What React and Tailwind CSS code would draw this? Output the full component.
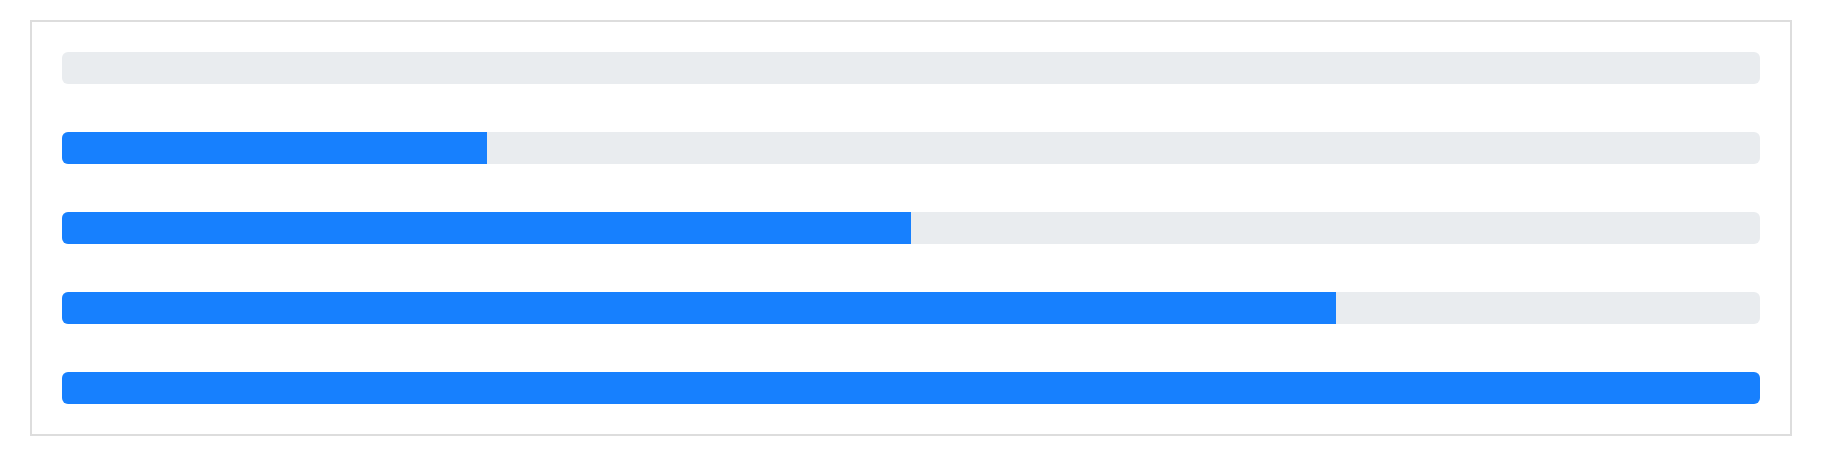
import React from "react";

const values = [0, 25, 50, 75, 100];

export default function App() {
  return (
    <div className="bg-white w-[1828px] h-[456px] px-[30px] pt-[20px]">
      <div className="w-[1762px] border-2 border-[#dddddd] p-[30px] flex flex-col gap-[48px]">
        {values.map((v) => (
          <div
            key={v}
            className="h-[32px] w-full bg-[#e9ecef] rounded-[6px] overflow-hidden flex"
          >
            <div className="h-full bg-[#1780fe]" style={{ width: `${v}%` }} />
          </div>
        ))}
      </div>
    </div>
  );
}
